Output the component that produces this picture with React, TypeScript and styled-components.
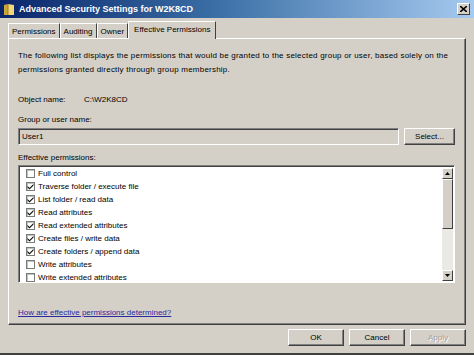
import styled, { createGlobalStyle } from 'styled-components'

const GlobalStyle = createGlobalStyle`
  html, body {
    margin: 0;
    padding: 0;
    background: #d4d0c8;
  }
  body {
    font-family: "Liberation Sans", Arial, sans-serif;
    font-size: 8px;
    color: #000;
  }
`

const permissions = [
  { label: 'Full control', checked: false },
  { label: 'Traverse folder / execute file', checked: true },
  { label: 'List folder / read data', checked: true },
  { label: 'Read attributes', checked: true },
  { label: 'Read extended attributes', checked: true },
  { label: 'Create files / write data', checked: true },
  { label: 'Create folders / append data', checked: true },
  { label: 'Write attributes', checked: false },
  { label: 'Write extended attributes', checked: false },
]

const FolderIcon = () => (
  <svg width="12" height="13" viewBox="0 0 12 13">
    <path d="M1 2 L5 1 L5 12 L1 12 Z" fill="#c9a53a" />
    <path d="M5 1 L11 2 L11 12 L5 12 Z" fill="#f3d67a" />
    <path d="M5 1 L5 12" stroke="#8a6d1c" strokeWidth="0.8" />
  </svg>
)

const CheckMark = () => (
  <svg width="7" height="7" viewBox="0 0 7 7">
    <path d="M0.5 3 L2.5 5 L6.5 1 L6.5 2.6 L2.5 6.5 L0.5 4.6 Z" fill="#000" />
  </svg>
)

const Arrow = ({ up }: { up?: boolean }) => (
  <svg width="5" height="3" viewBox="0 0 5 3">
    <path d={up ? 'M0 3 L2.5 0 L5 3 Z' : 'M0 0 L5 0 L2.5 3 Z'} fill="#000" />
  </svg>
)

const App = () => {
  return (
    <Window>
      <GlobalStyle />
      <TitleBar>
        <FolderIcon />
        <Title>Advanced Security Settings for W2K8CD</Title>
        <CloseButton>
          <svg width="7" height="6" viewBox="0 0 7 6">
            <path d="M0 0 L7 6 M7 0 L0 6" stroke="#000" strokeWidth="1.6" />
          </svg>
        </CloseButton>
      </TitleBar>
      <Body>
        <TabStrip>
          <Tab>Permissions</Tab>
          <Tab>Auditing</Tab>
          <Tab>Owner</Tab>
          <Tab $active>Effective Permissions</Tab>
        </TabStrip>
        <Panel>
          <Intro>
            The following list displays the permissions that would be granted to the selected group or user, based solely on the
            <br />
            permissions granted directly through group membership.
          </Intro>
          <ObjectRow>
            <ObjectLabel>Object name:</ObjectLabel>
            <span>C:\W2K8CD</span>
          </ObjectRow>
          <Label>Group or user name:</Label>
          <InputRow>
            <NameInput>User1</NameInput>
            <Button $width={51}>Select...</Button>
          </InputRow>
          <Label>Effective permissions:</Label>
          <ListBox>
            <Items>
              {permissions.map((p) => (
                <Item key={p.label}>
                  <Check $checked={p.checked}>{p.checked && <CheckMark />}</Check>
                  <span>{p.label}</span>
                </Item>
              ))}
            </Items>
            <ScrollBar>
              <ScrollButton>
                <Arrow up />
              </ScrollButton>
              <Thumb />
              <Track />
              <ScrollButton>
                <Arrow />
              </ScrollButton>
            </ScrollBar>
          </ListBox>
          <HelpLink>How are effective permissions determined?</HelpLink>
        </Panel>
        <Footer>
          <Button $width={56}>OK</Button>
          <Button $width={56}>Cancel</Button>
          <Button $width={56} $disabled>Apply</Button>
        </Footer>
      </Body>
    </Window>
  )
}

const Window = styled.div`
  width: 474px;
  height: 355px;
  box-sizing: border-box;
  background: #d4d0c8;
  border-bottom: 2px solid #404040;
  display: flex;
  flex-direction: column;
  overflow: hidden;
`
const TitleBar = styled.div`
  height: 18px;
  display: flex;
  align-items: center;
  padding: 0 4px 0 3px;
  gap: 4px;
  background: linear-gradient(90deg, #0a246a 0%, #3a6ea5 45%, #a6caf0 100%);
`
const Title = styled.div`
  flex: 1;
  color: #fff;
  font-weight: bold;
  font-size: 9px;
`
const CloseButton = styled.div`
  width: 11px;
  height: 10px;
  display: flex;
  align-items: center;
  justify-content: center;
  background: #d4d0c8;
  border: 1px solid;
  border-color: #fff #404040 #404040 #fff;
`
const Body = styled.div`
  flex: 1;
  display: flex;
  flex-direction: column;
  padding: 0 8px;
`
const TabStrip = styled.div`
  display: flex;
  align-items: flex-end;
  height: 19px;
  margin-top: 1px;
`
const Tab = styled.div<{ $active?: boolean }>`
  height: ${(p) => (p.$active ? 18 : 15)}px;
  box-sizing: border-box;
  display: flex;
  align-items: center;
  padding: ${(p) => (p.$active ? '0 5px 2px 5px' : '0 3px')};
  border: 1px solid;
  border-color: #fff #404040 transparent #fff;
  border-bottom: none;
  margin-bottom: ${(p) => (p.$active ? -1 : 0)}px;
  background: #d4d0c8;
  position: relative;
  z-index: ${(p) => (p.$active ? 1 : 0)};
`
const Panel = styled.div`
  height: 287px;
  box-sizing: border-box;
  border: 1px solid;
  border-color: #fff #404040 #404040 #fff;
  box-shadow: inset -1px -1px 0 #808080;
  padding: 10px 10px 0 9px;
  display: flex;
  flex-direction: column;
`
const Intro = styled.div`
  letter-spacing: 0.22px;
  line-height: 14px;
`
const ObjectRow = styled.div`
  display: flex;
  margin-top: 16px;
  line-height: 14px;
`
const ObjectLabel = styled.span`
  width: 66px;
`
const Label = styled.div`
  margin-top: 6px;
  line-height: 14px;
`
const InputRow = styled.div`
  display: flex;
  align-items: center;
  justify-content: space-between;
  margin-top: 1px;
`
const NameInput = styled.div`
  width: 381px;
  height: 17px;
  box-sizing: border-box;
  display: flex;
  align-items: center;
  padding-left: 3px;
  border: 1px solid;
  border-color: #808080 #fff #fff #808080;
  box-shadow: inset 1px 1px 0 #404040;
`
const Button = styled.div<{ $width: number; $disabled?: boolean }>`
  width: ${(p) => p.$width}px;
  height: 17px;
  box-sizing: border-box;
  display: flex;
  align-items: center;
  justify-content: center;
  background: #d4d0c8;
  border: 1px solid;
  border-color: #fff #404040 #404040 #fff;
  box-shadow: inset -1px -1px 0 #808080;
  color: ${(p) => (p.$disabled ? '#a0a0a0' : '#000')};
  text-shadow: ${(p) => (p.$disabled ? '1px 1px 0 #fff' : 'none')};
`
const ListBox = styled.div`
  height: 118px;
  box-sizing: border-box;
  display: flex;
  background: #fff;
  border: 1px solid;
  border-color: #808080 #fff #fff #808080;
  box-shadow: inset 1px 1px 0 #404040;
  overflow: hidden;
`
const Items = styled.div`
  flex: 1;
  padding: 1px 0 0 7px;
`
const Item = styled.div`
  display: flex;
  align-items: center;
  gap: 3px;
  height: 13px;
`
const Check = styled.div<{ $checked: boolean }>`
  width: 9px;
  height: 9px;
  box-sizing: border-box;
  display: flex;
  align-items: center;
  justify-content: center;
  background: #fff;
  border: 1px solid #7a7a7a;
  box-shadow: inset 1px 1px 0 #c0c0c0;
`
const ScrollBar = styled.div`
  width: 11px;
  margin: 2px 1px 1px 0;
  display: flex;
  flex-direction: column;
  background: #ebe9e4;
`
const ScrollButton = styled.div`
  height: 11px;
  box-sizing: border-box;
  display: flex;
  align-items: center;
  justify-content: center;
  background: #d4d0c8;
  border: 1px solid;
  border-color: #fff #404040 #404040 #fff;
`
const Thumb = styled.div`
  height: 50px;
  box-sizing: border-box;
  background: #d4d0c8;
  border: 1px solid;
  border-color: #fff #404040 #404040 #fff;
`
const Track = styled.div`
  flex: 1;
`
const HelpLink = styled.a`
  margin-top: 25px;
  color: #2a2aa0;
  text-decoration: underline;
  cursor: pointer;
`
const Footer = styled.div`
  display: flex;
  justify-content: flex-end;
  gap: 5px;
  margin-top: 4px;
`

export default App
